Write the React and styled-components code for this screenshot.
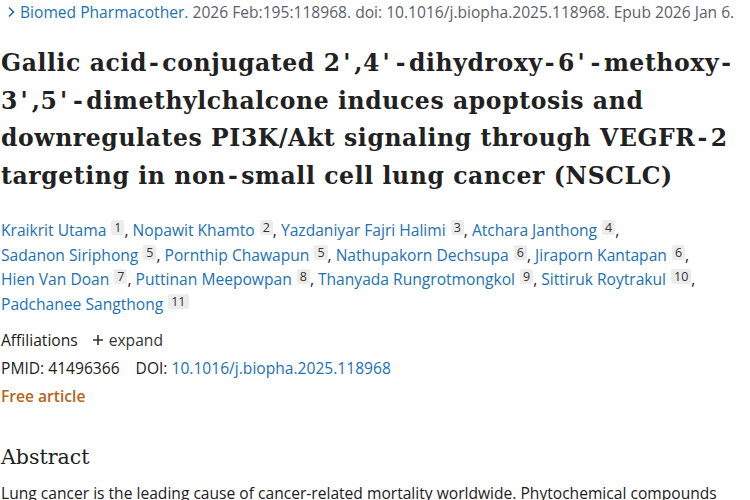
import React from 'react';
import styled, { createGlobalStyle } from 'styled-components';

const GlobalStyle = createGlobalStyle`
  html, body {
    margin: 0;
    padding: 0;
    background: #fff;
  }
  body {
    font-family: "Open Sans", "Noto Sans", sans-serif;
    color: #212121;
  }
`;

const Page = styled.div`
  width: 750px;
  height: 500px;
  overflow: hidden;
  padding: 0 0 0 1px;
  box-sizing: border-box;
`;

const Citation = styled.div`
  display: flex;
  align-items: center;
  gap: 4px;
  font-size: 15.6px;
  line-height: 24px;
  color: #5b616b;
  white-space: nowrap;
`;

const Chevron = styled.svg`
  width: 9px;
  height: 12px;
  margin-left: 6px;
  flex: none;
`;

const Journal = styled.a`
  color: #2171b5;
  text-decoration: none;
`;

const Title = styled.h1`
  margin: 21px 0 0;
  font-family: "DejaVu Serif", "Liberation Serif", serif;
  font-weight: 700;
  font-size: 23.5px;
  letter-spacing: 0.6px;
  line-height: 37.5px;
  color: #212121;
`;

const TitleLine = styled.span`
  display: block;
  white-space: nowrap;
`;

const Mark = styled.span`
  padding-left: ${(p) => (p.$prime ? 2.5 : 2)}px;
  letter-spacing: ${(p) => (p.$prime ? 4 : 3.5)}px;
`;

const Authors = styled.div`
  margin-top: 23px;
  font-size: 15.6px;
  line-height: 24.7px;
  color: #212121;
  white-space: nowrap;
`;

const AuthorLink = styled.a`
  color: #2171b5;
  text-decoration: none;
`;

const Sup = styled.sup`
  display: inline-block;
  margin-left: 5px;
  padding: 0 3px;
  background: #ececec;
  border-radius: 2px;
  font-size: 12.5px;
  line-height: 15px;
  color: #333;
  vertical-align: 4px;
`;

const Row = styled.div`
  display: flex;
  align-items: center;
  gap: ${(p) => p.$gap || 0}px;
  margin-top: ${(p) => p.$top || 0}px;
  font-size: 15.6px;
  line-height: 28px;
  color: #212121;
`;

const Expand = styled.span`
  display: flex;
  align-items: center;
  gap: 5px;
  color: #333;
`;

const Free = styled.div`
  font-size: 15.6px;
  line-height: 28px;
  font-weight: 600;
  color: #b5651d;
`;

const Heading = styled.h2`
  margin: 33px 0 0;
  font-family: "DejaVu Serif", "Liberation Serif", serif;
  font-weight: 400;
  font-size: 20.5px;
  line-height: 28px;
  color: #212121;
`;

const Body = styled.p`
  margin: 10px 0 0;
  font-size: 15.6px;
  line-height: 24px;
  white-space: nowrap;
`;

const authors = [
  ['Kraikrit Utama', 1],
  ['Nopawit Khamto', 2],
  ['Yazdaniyar Fajri Halimi', 3],
  ['Atchara Janthong', 4],
  ['Sadanon Siriphong', 5],
  ['Pornthip Chawapun', 5],
  ['Nathupakorn Dechsupa', 6],
  ['Jiraporn Kantapan', 6],
  ['Hien Van Doan', 7],
  ['Puttinan Meepowpan', 8],
  ['Thanyada Rungrotmongkol', 9],
  ['Sittiruk Roytrakul', 10],
  ['Padchanee Sangthong', 11],
];

const breaks = [3, 7, 11];

const titleLines = [
  "Gallic acid-conjugated 2',4'-dihydroxy-6'-methoxy-",
  "3',5'-dimethylchalcone induces apoptosis and",
  'downregulates PI3K/Akt signaling through VEGFR-2',
  'targeting in non-small cell lung cancer (NSCLC)',
];

// Merriweather's primes and hyphens run wider than DejaVu's, so give them some room
const spaced = (line) =>
  line.split(/([-'])/).map((part, i) =>
    part === '-' || part === "'" ? (
      <Mark key={i} $prime={part === "'"}>
        {part}
      </Mark>
    ) : (
      part
    )
  );

export default function App() {
  return (
    <Page>
      <GlobalStyle />
      <Citation>
        <Chevron viewBox="0 0 9 12">
          <path d="M2 1.5 L6.5 6 L2 10.5" fill="none" stroke="#2171b5" strokeWidth="1.7" />
        </Chevron>
        <span>
          <Journal>Biomed Pharmacother.</Journal> 2026 Feb:195:118968. doi: 10.1016/j.biopha.2025.118968. Epub 2026 Jan 6.
        </span>
      </Citation>
      <Title>
        {titleLines.map((l) => (
          <TitleLine key={l}>{spaced(l)}</TitleLine>
        ))}
      </Title>
      <Authors>
        {authors.map(([name, n], i) => (
          <React.Fragment key={name}>
            <AuthorLink>{name}</AuthorLink>
            <Sup>{n}</Sup>
            {i < authors.length - 1 && ', '}
            {breaks.includes(i) && <br />}
          </React.Fragment>
        ))}
      </Authors>
      <Row $top={9} $gap={14}>
        <span>Affiliations</span>
        <Expand>
          <svg width="12" height="12" viewBox="0 0 12 12">
            <path d="M6 1v10M1 6h10" stroke="#333" strokeWidth="1.6" />
          </svg>
          expand
        </Expand>
      </Row>
      <Row $gap={16}>
        <span>PMID: 41496366</span>
        <span>
          DOI: <AuthorLink>10.1016/j.biopha.2025.118968</AuthorLink>
        </span>
      </Row>
      <Free>Free article</Free>
      <Heading>Abstract</Heading>
      <Body>
        Lung cancer is the leading cause of cancer-related mortality worldwide. Phytochemical compounds
      </Body>
    </Page>
  );
}
